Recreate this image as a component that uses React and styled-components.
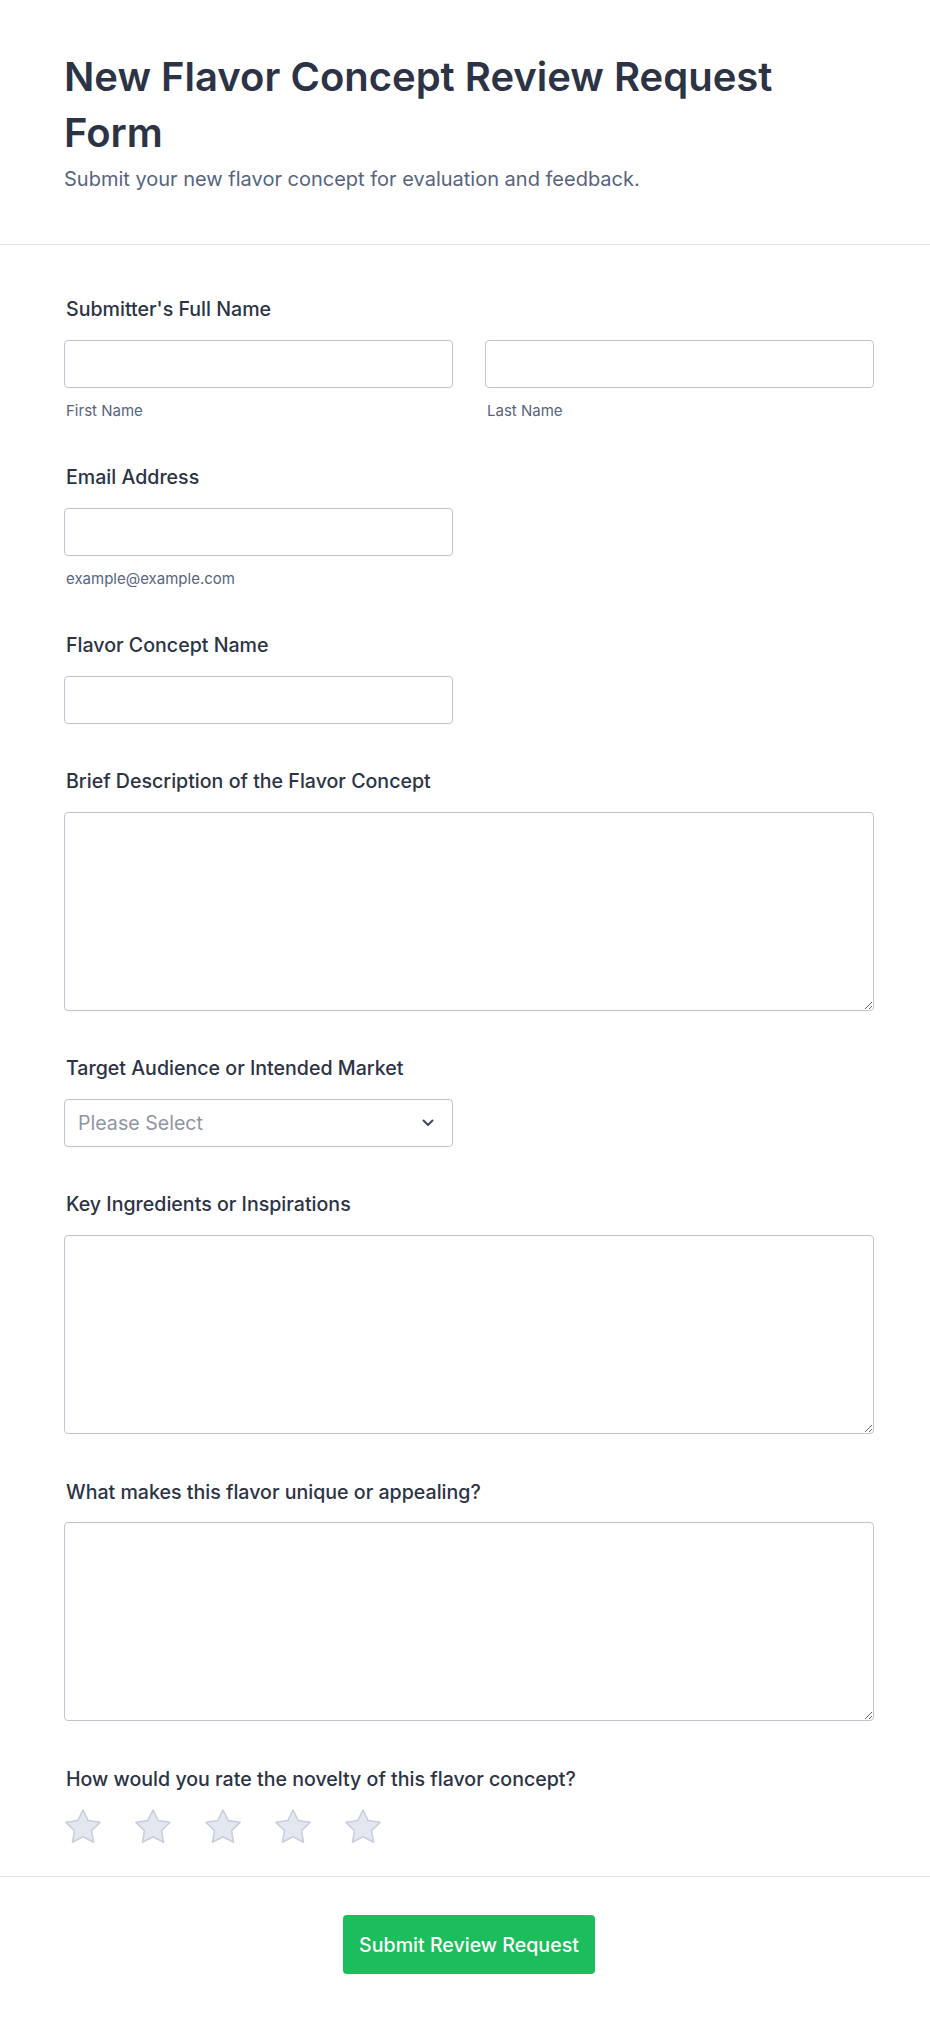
import React from "react";
import styled, { createGlobalStyle } from "styled-components";

const GlobalStyle = createGlobalStyle`
  body {
    margin: 0;
    background: #ffffff;
    font-family: Inter, "Noto Sans", "Liberation Sans", sans-serif;
    color: #2c3345;
  }
  * { box-sizing: border-box; }
`;

const Page = styled.div`
  width: 100%;
  background: #fff;
`;

const Header = styled.header`
  padding: 49px 56px 51px 64px;
  border-bottom: 1px solid #e3e5ea;
`;

const Title = styled.h1`
  margin: 0;
  max-width: 760px;
  font-size: 40px;
  line-height: 56px;
  font-weight: 600;
  color: #2c3345;
`;

const Subtitle = styled.p`
  margin: 4px 0 0;
  font-size: 20px;
  line-height: 28px;
  color: #57647e;
`;

const Body = styled.div`
  padding: 51px 56px 30px 64px;
`;

const Field = styled.div`
  margin-bottom: ${(p) => (p.$last ? "0" : "44.6px")};
`;

const Label = styled.div`
  padding-left: 2px;
  font-size: 19.6px;
  line-height: 27px;
  font-weight: 500;
  color: #2c3345;
  margin-bottom: 16.5px;
`;

const Row = styled.div`
  display: grid;
  grid-template-columns: 1fr 1fr;
  column-gap: 32px;
`;

const Input = styled.input`
  display: block;
  width: 100%;
  height: 48px;
  border: 1px solid #bfc5d2;
  border-radius: 4px;
  padding: 0 12px;
  font: inherit;
  font-size: 18px;
  background: #fff;
`;

const Sublabel = styled.div`
  margin-top: 14px;
  padding-left: 2px;
  font-size: 15px;
  line-height: 18px;
  color: #57647e;
`;

const TextArea = styled.textarea`
  display: block;
  width: 100%;
  height: 199px;
  border: 1px solid #bfc5d2;
  border-radius: 4px;
  padding: 10px 12px;
  font: inherit;
  font-size: 18px;
  background: #fff;
`;

const SelectBox = styled.div`
  display: flex;
  align-items: center;
  justify-content: space-between;
  height: 48px;
  padding: 0 18px 0 13px;
  border: 1px solid #bfc5d2;
  border-radius: 4px;
  font-size: 19.6px;
  color: #8f96a3;
  background: #fff;
`;

const Stars = styled.div`
  display: flex;
  gap: 32px;
  margin-top: -1px;
`;

const Footer = styled.footer`
  display: flex;
  justify-content: center;
  padding: 38px 56px 48px 64px;
  border-top: 1px solid #e3e5ea;
`;

const SubmitButton = styled.button`
  height: 59px;
  padding: 0 16px;
  border: none;
  border-radius: 4px;
  background: #1bbd5c;
  color: #fff;
  font-family: inherit;
  font-size: 19.6px;
  font-weight: 500;
  cursor: pointer;
`;

const Star = () => (
  <svg width="38" height="38" viewBox="1.5 1.5 21 21">
    <polygon
      points="12,2.6 14.9,8.5 21.4,9.4 16.7,14 17.8,20.4 12,17.4 6.2,20.4 7.3,14 2.6,9.4 9.1,8.5"
      fill="#e3e7f0"
      stroke="#c9cfdb"
      strokeWidth="0.9"
      strokeLinejoin="round"
    />
  </svg>
);

const Chevron = () => (
  <svg width="12" height="8" viewBox="0 0 12 8">
    <path d="M1.5 1.5 L6 6 L10.5 1.5" fill="none" stroke="#3f4a63" strokeWidth="2" strokeLinecap="round" strokeLinejoin="round" />
  </svg>
);

export default function App() {
  return (
    <Page>
      <GlobalStyle />
      <Header>
        <Title>New Flavor Concept Review Request Form</Title>
        <Subtitle>Submit your new flavor concept for evaluation and feedback.</Subtitle>
      </Header>
      <Body>
        <Field>
          <Label>Submitter's Full Name</Label>
          <Row>
            <div>
              <Input type="text" />
              <Sublabel>First Name</Sublabel>
            </div>
            <div>
              <Input type="text" />
              <Sublabel>Last Name</Sublabel>
            </div>
          </Row>
        </Field>
        <Field>
          <Label>Email Address</Label>
          <Row>
            <div>
              <Input type="email" />
              <Sublabel>example@example.com</Sublabel>
            </div>
          </Row>
        </Field>
        <Field>
          <Label>Flavor Concept Name</Label>
          <Row>
            <Input type="text" />
          </Row>
        </Field>
        <Field>
          <Label>Brief Description of the Flavor Concept</Label>
          <TextArea />
        </Field>
        <Field>
          <Label>Target Audience or Intended Market</Label>
          <Row>
            <SelectBox>
              <span>Please Select</span>
              <Chevron />
            </SelectBox>
          </Row>
        </Field>
        <Field>
          <Label>Key Ingredients or Inspirations</Label>
          <TextArea />
        </Field>
        <Field>
          <Label>What makes this flavor unique or appealing?</Label>
          <TextArea />
        </Field>
        <Field $last>
          <Label>How would you rate the novelty of this flavor concept?</Label>
          <Stars>
            {[1, 2, 3, 4, 5].map((n) => (
              <Star key={n} />
            ))}
          </Stars>
        </Field>
      </Body>
      <Footer>
        <SubmitButton type="button">Submit Review Request</SubmitButton>
      </Footer>
    </Page>
  );
}
